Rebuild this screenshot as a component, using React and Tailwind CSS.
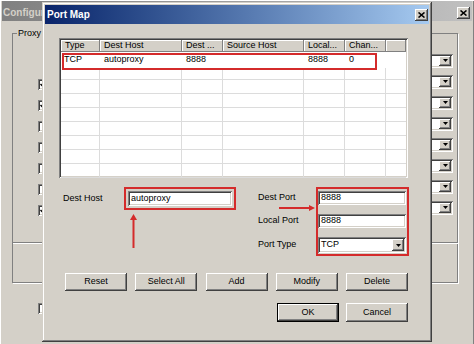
import React from "react";

const raised =
  "shadow-[inset_-1px_-1px_#404040,inset_1px_1px_#ffffff,inset_-2px_-2px_#808080,inset_2px_2px_#d4d0c8]";
const sunken =
  "shadow-[inset_1px_1px_#808080,inset_-1px_-1px_#ffffff,inset_2px_2px_#404040,inset_-2px_-2px_#d4d0c8]";

const cols = [39, 82, 41, 81, 41, 41];
const headers = ["Type", "Dest Host", "Dest ...", "Source Host", "Local...", "Chan..."];
const row1 = ["TCP", "autoproxy", "8888", "", "8888", "0"];

function CloseBtn() {
  return (
    <div className={`flex h-[12px] w-[13px] items-center justify-center bg-[#d4d0c8] ${raised}`}>
      <svg width="7" height="6" viewBox="0 0 7 6">
        <path d="M0.5 0.5 L6.5 5.5 M6.5 0.5 L0.5 5.5" stroke="#000" strokeWidth="1.6" />
      </svg>
    </div>
  );
}

function DropBtn({ className = "" }) {
  return (
    <div className={`flex w-[12px] items-center justify-center bg-[#d4d0c8] ${raised} ${className}`}>
      <svg width="5" height="3" viewBox="0 0 5 3">
        <polygon points="0,0 5,0 2.5,3" fill="#000" />
      </svg>
    </div>
  );
}

function Check({ checked }) {
  return (
    <div className={`flex h-[11px] w-[11px] items-center justify-center bg-white ${sunken}`}>
      {checked && (
        <svg width="7" height="7" viewBox="0 0 7 7">
          <path d="M0.5 3 L2.5 5 L6.5 1" fill="none" stroke="#000" strokeWidth="1.5" />
        </svg>
      )}
    </div>
  );
}

function Btn({ children, def, tall }) {
  return (
    <div
      className={`flex w-[62px] items-center justify-center bg-[#d4d0c8] text-[9px] text-black ${
        tall ? "h-[19px]" : "h-[18px]"
      } ${def ? "border border-black" : ""} ${raised}`}
    >
      {children}
    </div>
  );
}

function Field({ children, h = "h-[14px]" }) {
  return (
    <div className={`flex items-center bg-white pl-[3px] text-[9px] text-black ${h} ${sunken}`}>
      {children}
    </div>
  );
}

export default function App() {
  const checks = [null, true, true, false, false, false, false, true];
  return (
    <div className="relative h-[344px] w-[474px] overflow-hidden bg-[#d4d0c8] font-['Liberation_Sans',Arial,sans-serif]">
      {/* background Configuration window */}
      <div className="flex h-full flex-col shadow-[inset_1px_1px_#ffffff,inset_-1px_0_#808080]">
        <div className="mx-[2px] mt-[1px] flex h-[20px] items-center justify-between bg-gradient-to-r from-[#808080] to-[#c0c0c0] pl-[1px] pr-[2px] pt-[3px]">
          <div className="w-[39px] overflow-hidden whitespace-nowrap text-[10px] font-bold text-[#d4d0c8]">
            Configuration
          </div>
          <CloseBtn />
        </div>

        <div className="relative ml-[12px] mt-[12px] h-[210px] w-[446px] border border-[#808080] shadow-[1px_1px_#ffffff]">
          <span className="absolute -top-[7px] left-[4px] bg-[#d4d0c8] px-[1px] text-[9px] text-black">
            Proxy
          </span>
          <div className="flex flex-col pt-[16px]">
            {checks.map((c, i) => (
              <div key={i} className="flex h-[21px] items-center pl-[25px] pr-[4px]">
                <div className="w-[11px] pt-[6px]">{c !== null && <Check checked={c} />}</div>
                <div className={`ml-auto flex h-[14px] w-[160px] justify-end bg-white p-[2px] ${sunken}`}>
                  <DropBtn className="h-[10px]" />
                </div>
              </div>
            ))}
          </div>
        </div>
        <div className="ml-[12px] h-[40px] w-[446px] border border-t-0 border-[#808080] shadow-[1px_1px_#ffffff]" />
        <div className="ml-[38px] mt-[20px]">
          <Check checked={false} />
        </div>
      </div>

      {/* Port Map dialog */}
      <div className="absolute left-[42px] top-[2px] flex h-[340px] w-[390px] flex-col bg-[#d4d0c8] p-[3px] shadow-[inset_-1px_-1px_#404040,inset_1px_1px_#d4d0c8,inset_-2px_-2px_#808080,inset_2px_2px_#ffffff]">
        <div className="flex h-[19px] items-center justify-between bg-gradient-to-r from-[#0a246a] to-[#a6caf0] pl-[2px] pr-[1px]">
          <span className="text-[10px] font-bold text-white">Port Map</span>
          <CloseBtn />
        </div>

        <div className="flex flex-col px-[14px] pt-[14px]">
          {/* list view */}
          <div className={`relative h-[140px] w-[349px] overflow-hidden bg-white p-[2px] ${sunken}`}>
            <div className="flex h-[12px]">
              {headers.map((h, i) => (
                <div
                  key={h}
                  style={{ width: cols[i] }}
                  className="flex shrink-0 items-center overflow-hidden whitespace-nowrap bg-[#d4d0c8] pl-[4px] text-[9px] text-black shadow-[inset_-1px_-1px_#808080,inset_1px_1px_#ffffff]"
                >
                  {h}
                </div>
              ))}
              <div className="flex-1 bg-[#d4d0c8] shadow-[inset_-1px_-1px_#808080,inset_1px_1px_#ffffff]" />
            </div>
            <div className="flex h-[16px]">
              {row1.map((t, i) => (
                <div
                  key={i}
                  style={{ width: cols[i] }}
                  className={`flex shrink-0 items-center whitespace-nowrap text-[9px] text-black ${
                    i === 0 ? "pl-[3px]" : "pl-[4px]"
                  }`}
                >
                  {t}
                </div>
              ))}
            </div>
            {[12, 14, 14, 14, 14, 14, 14, 14].map((h, r) => (
              <div
                key={r}
                className={`flex border-b border-[#dcdcdc] ${h === 12 ? "h-[12px]" : "h-[14px]"}`}
              >
                {cols.map((w, i) => (
                  <div key={i} style={{ width: w }} className="shrink-0 border-r border-[#dcdcdc]" />
                ))}
              </div>
            ))}
            <div className="absolute left-[3px] top-[15px] h-[17px] w-[315px] border-2 border-[#d42b2b]" />
          </div>

          {/* fields */}
          <div className="mt-[9px] flex items-start">
            <div className="ml-[4px] flex items-center">
              <span className="w-[61px] text-[9px] text-black">Dest Host</span>
              <div className="w-[112px] border-2 border-[#d42b2b] p-[2px]">
                <Field h="h-[15px]">autoproxy</Field>
              </div>
            </div>
            <div className="ml-[22px] flex">
              <div className="flex w-[58px] flex-col gap-[9px] pt-[4px] text-[9px] text-black">
                <span className="flex h-[14px] items-center">Dest Port</span>
                <span className="flex h-[14px] items-center">Local Port</span>
                <span className="flex h-[16px] items-center">Port Type</span>
              </div>
              <div className="flex w-[93px] flex-col gap-[9px] border-2 border-[#d42b2b] pb-[1px] pr-[1px] pt-[2px]">
                <Field>8888</Field>
                <Field>8888</Field>
                <div className={`flex h-[16px] items-center bg-white p-[2px] text-[9px] text-black ${sunken}`}>
                  <span className="flex-1 pl-[1px]">TCP</span>
                  <DropBtn className="h-[12px]" />
                </div>
              </div>
            </div>
          </div>

          {/* buttons */}
          <div className="ml-[6px] mt-[17px] flex w-[343px] justify-between">
            <Btn>Reset</Btn>
            <Btn>Select All</Btn>
            <Btn>Add</Btn>
            <Btn>Modify</Btn>
            <Btn>Delete</Btn>
          </div>
          <div className="ml-[6px] mt-[12px] flex w-[343px] justify-end gap-[7px]">
            <Btn def tall>
              OK
            </Btn>
            <Btn tall>Cancel</Btn>
          </div>
        </div>

        {/* annotation arrows */}
        <svg className="absolute left-[87px] top-[212px]" width="9" height="34" viewBox="0 0 9 34">
          <line x1="4.5" y1="5" x2="4.5" y2="34" stroke="#d42b2b" strokeWidth="2" />
          <polygon points="4.5,0 1,6 8,6" fill="#d42b2b" />
        </svg>
        <svg className="absolute left-[237px] top-[202px]" width="36" height="8" viewBox="0 0 36 8">
          <line x1="0" y1="4" x2="31" y2="4" stroke="#d42b2b" strokeWidth="2" />
          <polygon points="36,4 30,1 30,7" fill="#d42b2b" />
        </svg>
      </div>
    </div>
  );
}
